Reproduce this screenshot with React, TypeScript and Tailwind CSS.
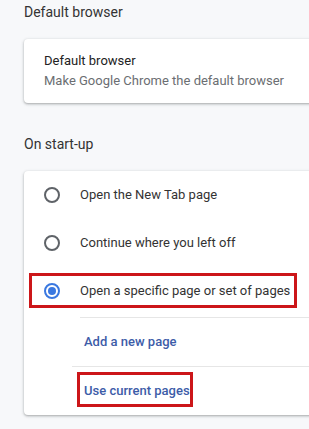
export default function App() {
  return (
    <div className="h-[429px] w-[309px] overflow-hidden bg-[#f7f8fa] font-['Roboto',sans-serif] text-[#202124]">
      <h2 className="pl-6 pt-[2px] text-[14px] leading-5 text-[#333]">Default browser</h2>

      <div className="mt-[17px] ml-6 flex h-16 w-[320px] flex-col justify-center rounded-[4px] bg-white pl-5 shadow-[0_1px_2px_rgba(60,64,67,0.3),0_1px_3px_1px_rgba(60,64,67,0.12)]">
        <p className="text-[13px] leading-5 text-[#222]">Default browser</p>
        <p className="text-[13px] leading-5 text-[#6b6e72]">Make Google Chrome the default browser</p>
      </div>

      <h2 className="mt-[31px] pl-6 text-[14px] leading-5 text-[#333]">On start-up</h2>

      <div className="relative mt-[17px] ml-6 w-[320px] rounded-[4px] bg-white shadow-[0_1px_2px_rgba(60,64,67,0.3),0_1px_3px_1px_rgba(60,64,67,0.12)]">
        <RadioRow label="Open the New Tab page" />
        <RadioRow label="Continue where you left off" />
        <div className="relative">
          <RadioRow label="Open a specific page or set of pages" checked />
          <div className="absolute left-[5px] top-[6px] h-[35px] w-[268px] border-[3px] border-[#cc1619]" />
        </div>
        <div className="ml-14 h-[3px] border-b border-[#e6e6e6]" />
        <div className="flex h-12 items-center pl-[60px] text-[13px] font-medium text-[#3d5ca8]">Add a new page</div>
        <div className="ml-12 border-t border-[#e6e6e6]" />
        <div className="relative flex h-12 items-center pl-[60px] text-[13px] font-medium text-[#3d5ca8]">
          Use current pages
          <div className="absolute left-[53px] top-[5px] h-[35px] w-[116px] border-[3px] border-[#cc1619]" />
        </div>
      </div>
    </div>
  );
}

function RadioRow({ label, checked = false }: { label: string; checked?: boolean }) {
  return (
    <div className="flex h-12 items-center pl-5">
      <span
        className={`flex h-4 w-4 items-center justify-center rounded-full border-2 ${
          checked ? "border-[#3a78e0]" : "border-[#5f6368]"
        }`}
      >
        {checked && <span className="h-2 w-2 rounded-full bg-[#3a78e0]" />}
      </span>
      <span className="ml-5 text-[13px] text-[#333]">{label}</span>
    </div>
  );
}
